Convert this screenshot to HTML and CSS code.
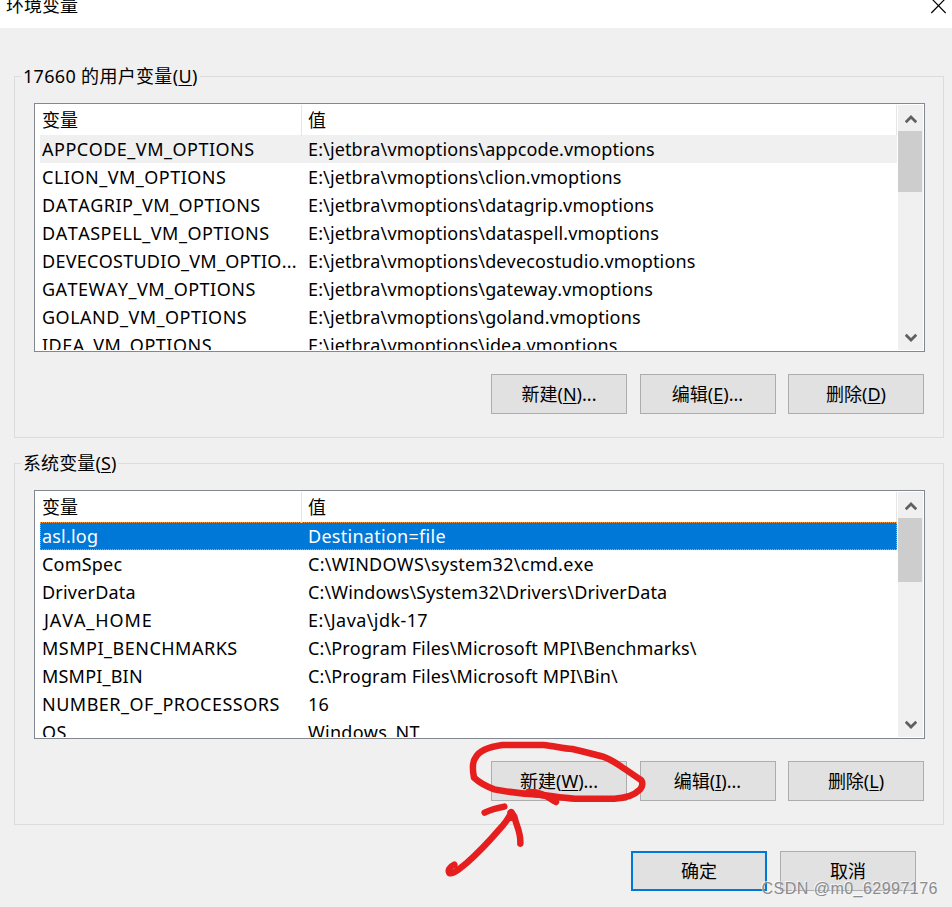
FILE: index.html
```
<!DOCTYPE html>
<html lang="zh-CN">
<head>
<meta charset="utf-8">
<title>环境变量</title>
<link rel="stylesheet" href="styles.css">
</head>
<body>
<div class="dialog">
  <header class="titlebar"><span>环境变量</span>
    <svg class="close" width="16" height="14" viewBox="0 0 16 14"><path d="M1.500 -1.500 15.700 13M15.500 -1.500 1.300 13" /></svg>
  </header>
  <main class="content">
    <section class="group">
      <h2 class="legend wide">17660 的用户变量(<u>U</u>)</h2>
      <div class="list">
        <div class="table">
          <div class="row head"><span>变量</span><span>值</span></div>
          <div class="row hot"><span>APPCODE_VM_OPTIONS</span><span>E:\jetbra\vmoptions\appcode.vmoptions</span></div>
          <div class="row"><span>CLION_VM_OPTIONS</span><span>E:\jetbra\vmoptions\clion.vmoptions</span></div>
          <div class="row"><span>DATAGRIP_VM_OPTIONS</span><span>E:\jetbra\vmoptions\datagrip.vmoptions</span></div>
          <div class="row"><span>DATASPELL_VM_OPTIONS</span><span>E:\jetbra\vmoptions\dataspell.vmoptions</span></div>
          <div class="row"><span class="clipped">DEVECOSTUDIO_VM_OPTIO...</span><span>E:\jetbra\vmoptions\devecostudio.vmoptions</span></div>
          <div class="row"><span>GATEWAY_VM_OPTIONS</span><span>E:\jetbra\vmoptions\gateway.vmoptions</span></div>
          <div class="row"><span>GOLAND_VM_OPTIONS</span><span>E:\jetbra\vmoptions\goland.vmoptions</span></div>
          <div class="row"><span>IDEA_VM_OPTIONS</span><span>E:\jetbra\vmoptions\idea.vmoptions</span></div>
        </div>
        <div class="scroll">
          <svg class="arrow" viewBox="0 0 12 10"><path d="M.7 8.300 6 3 11.300 8.300" /></svg>
          <div class="thumb"></div>
          <svg class="arrow down" viewBox="0 0 12 10"><path d="M.7 1.700 6 7 11.300 1.700" /></svg>
        </div>
      </div>
      <div class="buttons">
        <button>新建(<u>N</u>)...</button><button>编辑(<u>E</u>)...</button><button>删除(<u>D</u>)</button>
      </div>
    </section>
    <section class="group">
      <h2 class="legend">系统变量(<u>S</u>)</h2>
      <div class="list">
        <div class="table">
          <div class="row head"><span>变量</span><span>值</span></div>
          <div class="row selected"><span class="lower">asl.log</span><span class="loose">Destination=file</span></div>
          <div class="row"><span class="lower">ComSpec</span><span class="loose">C:\WINDOWS\system32\cmd.exe</span></div>
          <div class="row"><span class="lower">DriverData</span><span>C:\Windows\System32\Drivers\DriverData</span></div>
          <div class="row"><span class="java">JAVA_HOME</span><span class="looser">E:\Java\jdk-17</span></div>
          <div class="row"><span>MSMPI_BENCHMARKS</span><span>C:\Program Files\Microsoft MPI\Benchmarks\</span></div>
          <div class="row"><span class="lower">MSMPI_BIN</span><span>C:\Program Files\Microsoft MPI\Bin\</span></div>
          <div class="row"><span>NUMBER_OF_PROCESSORS</span><span>16</span></div>
          <div class="row"><span>OS</span><span class="loose">Windows_NT</span></div>
        </div>
        <div class="scroll">
          <svg class="arrow" viewBox="0 0 12 10"><path d="M.7 8.300 6 3 11.300 8.300" /></svg>
          <div class="thumb tall"></div>
          <svg class="arrow down" viewBox="0 0 12 10"><path d="M.7 1.700 6 7 11.300 1.700" /></svg>
        </div>
      </div>
      <div class="buttons">
        <button>新建(<u>W</u>)...</button><button>编辑(<u>I</u>)...</button><button>删除(<u>L</u>)</button>
      </div>
    </section>
    <footer class="actions"><button class="default">确定</button><button>取消</button></footer>
  </main>
  <svg class="ink" width="260" height="177" viewBox="0 0 780 531">
    <path d="M102 143C97 117 97 94 107 82C119 60 151 50 187 45H310C340 47 365 55 397 57C430 64 465 74 489 80C520 91 538 107 553 116L600 148C611 155 608 173 597 181C578 201 548 205 523 206H405C364 204 332 197 300 194C250 192 205 186 163 178C141 170 118 158 102 143Z"/>
    <path d="M265 186C300 183 325 203 348 216M275 191 330 200M134 248C155 238 173 234 193 230"/>
    <path d="M43 404C29 411 23 421 28 429C37 435 57 417 80 399C125 361 164 315 189 286C201 271 209 260 214 246L223 260C229 288 243 306 241 341M211 249V264"/>
  </svg>
  <div class="watermark">CSDN @m0_62997176</div>
</div>
</body>
</html>
```
FILE: styles.css
```
* { box-sizing: border-box; }
body { margin: 0; background: #f0f0f0; }
.dialog {
  position: relative;
  width: 952px;
  height: 907px;
  overflow: hidden;
  background: #f0f0f0;
  color: #000;
  font: 18px/28px "Noto Sans", "Noto Sans CJK SC", sans-serif;
  font-kerning: none;
}
.titlebar {
  display: flex;
  justify-content: space-between;
  height: 28px;
  padding: 0 6px;
  background: #fff;
  line-height: 10px;
}
.close { width: 16px; height: 14px; fill: none; stroke: #000; stroke-width: 1.2; }
.content { padding: 48px 8px 0 14px; }
.group {
  height: 362px;
  margin-bottom: 25px;
  padding: 0 18px 0 19px;
  border: 1px solid #dcdcdc;
}
.legend {
  width: fit-content;
  height: 26px;
  margin: -15px 0 15px -13px;
  padding: 0 2px;
  background: #f0f0f0;
  font-size: 18px;
  font-weight: 400;
  line-height: 28px;
  letter-spacing: .1px;
}
.legend.wide { letter-spacing: .32px; }
u { text-decoration-thickness: 1px; text-underline-offset: 2px; }
.list {
  display: flex;
  justify-content: space-between;
  width: 891px;
  height: 249px;
  padding: 1px 1px 1px 5px;
  overflow: hidden;
  border: 1px solid #828790;
  background: #fff;
}
.table { width: 857px; height: 245px; overflow: hidden; }
.row {
  display: grid;
  grid-template-columns: 262px 1fr;
  height: 28px;
  white-space: nowrap;
}
.row span { padding-left: 2px; letter-spacing: .5px; }
.row span + span { padding-left: 6px; letter-spacing: .13px; }
.row .lower { letter-spacing: .2px; }
.row .clipped { letter-spacing: .27px; }
.row .java { padding-left: 4px; letter-spacing: .9px; }
.row span + .loose { letter-spacing: .28px; }
.row span + .looser { letter-spacing: .42px; }
.head { height: 30px; line-height: 31px; border-right: 1px solid #e5e5e5; }
.row.head span { letter-spacing: 0; }
.head span:first-child { border-right: 1px solid #e5e5e5; }
.hot { background: #f0f0f0; }
.selected { background: #0078d7; color: #fff; outline: 1px dotted #ff9a3c; outline-offset: -1px; }
.scroll {
  display: flex;
  flex-direction: column;
  width: 25px;
  background: #f0f0f0;
}
.arrow {
  width: 12px;
  height: 10px;
  margin: 9px 0 7px 6.500px;
  fill: none;
  stroke: #606060;
  stroke-width: 2.8;
}
.thumb { width: 24px; height: 61px; background: #cdcdcd; }
.thumb.tall { height: 64px; }
.arrow.down { margin: auto 0 7px 6.500px; }
.buttons { display: flex; gap: 12.5px; justify-content: flex-end; margin: 22px 0 0; padding-right: 1px; }
button {
  width: 136px;
  height: 40px;
  padding: 0;
  border: 1px solid #adadad;
  background: #e1e1e1;
  color: #000;
  font: inherit;
  font-kerning: none;
}
button.default { border: 2px solid #0078d7; }
.actions { display: flex; justify-content: flex-end; gap: 13px; margin-top: 26px; padding-right: 28px; }
.ink {
  position: absolute;
  left: 440px;
  top: 730px;
  fill: none;
  stroke: #e61e1e;
  stroke-width: 19.5;
  stroke-linecap: round;
  stroke-linejoin: round;
}
.watermark {
  position: absolute;
  right: 14px;
  top: 879px;
  color: #8c8c8c;
  font: 16px/20px "Liberation Sans", sans-serif;
  letter-spacing: .48px;
  text-shadow: -1px -1px 0 rgba(255, 255, 255, .7);
}
```
